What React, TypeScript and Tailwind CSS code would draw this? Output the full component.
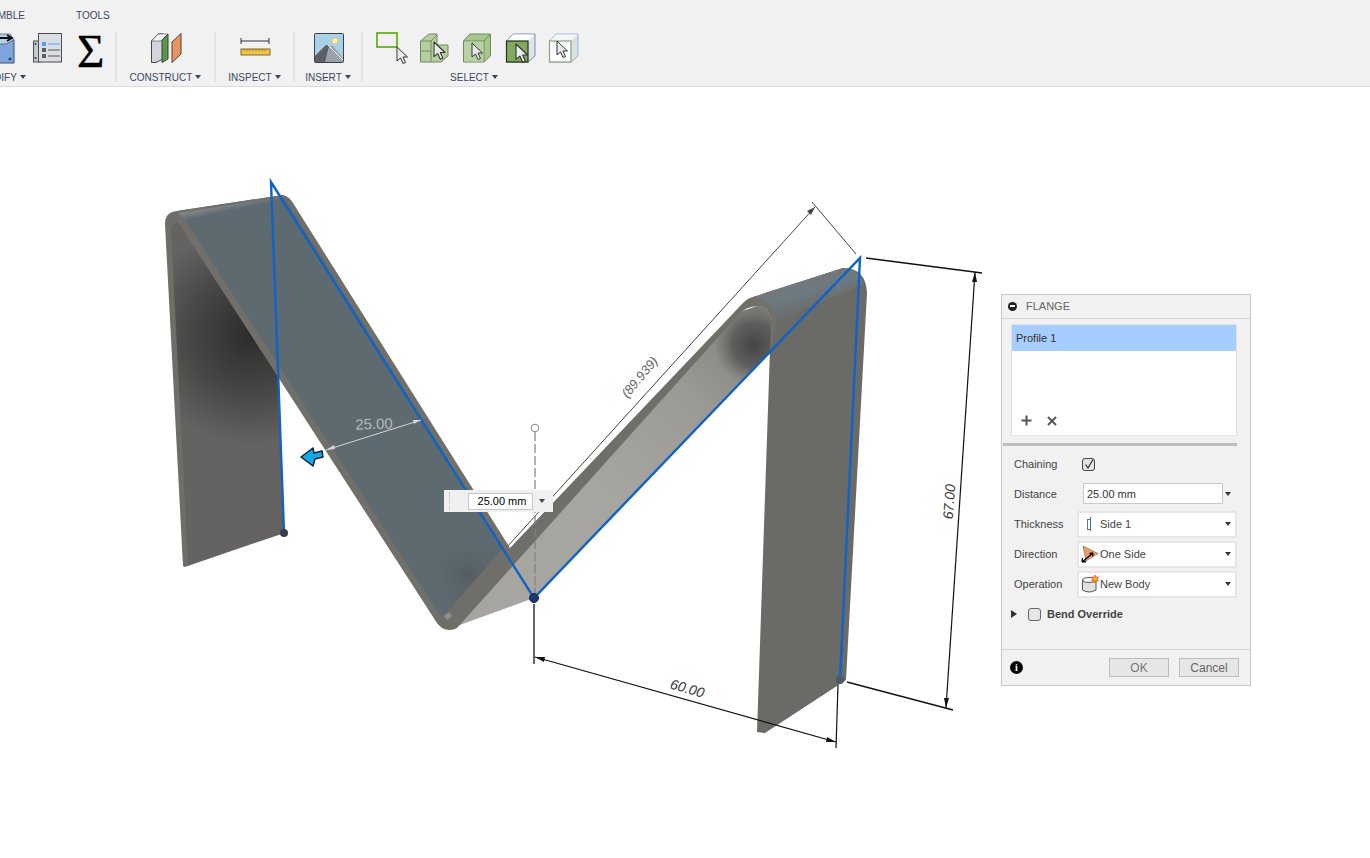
import React from 'react'

const font = { fontFamily: '"Liberation Sans", Arial, sans-serif' }

function Cursor({ x, y, s = 1 }: { x: number; y: number; s?: number }) {
	return (
		<path
			transform={`translate(${x} ${y}) scale(${s})`}
			d="M0 0 L0 14 L3.5 11 L6 16.5 L8.5 15.5 L6 10 L10.5 10 Z"
			fill="#e8eaec"
			stroke="#333"
			strokeWidth="1"
			strokeLinejoin="round"
		/>
	)
}

function Icon({ w = 32, h = 34, children }: { w?: number; h?: number; children: React.ReactNode }) {
	return (
		<svg width={w} height={h} viewBox={`0 0 ${w} ${h}`} className="block shrink-0">
			{children}
		</svg>
	)
}

function Caret() {
	return <span className="ml-[3px] inline-block h-0 w-0 border-x-[3px] border-t-[4px] border-x-transparent border-t-[#3c4354] align-[2px]" />
}

function Sep() {
	return <div className="h-[50px] w-[2px] shrink-0 bg-[#e2e2e2]" />
}

function Group({ width, label, children }: { width: number; label: string; children: React.ReactNode }) {
	return (
		<div className="flex shrink-0 flex-col items-center" style={{ width }}>
			<div className="flex h-[38px] items-start">{children}</div>
			<div className="mt-[2px] text-[10px] leading-[12px] whitespace-nowrap text-[#3b4763]">
				{label}
				<Caret />
			</div>
		</div>
	)
}

function Toolbar() {
	return (
		<div className="relative h-[87px] overflow-hidden border-b border-[#dcdcdc] bg-[#f1f1f1] text-[10px] text-[#3b4763]" style={font}>
			<div className="flex h-[32px] items-start pt-[10px] leading-[12px]">
				<span className="-ml-[29px] w-[105px]">ASSEMBLE</span>
				<span>TOOLS</span>
			</div>
			<div className="flex items-start">
				<div className="-ml-[16px] flex w-[131px] shrink-0 flex-col">
					<div className="flex h-[38px] gap-[16px]">
						<Icon>
							<path d="M2 8 L10 3 H24 L30 8 V31 H2 Z" fill="#7fa6dc" stroke="#37506f" />
							<path d="M2 8 L8 2 H26 L30 8 L22 12 H8 Z" fill="#b9cfe9" stroke="#37506f" strokeWidth=".7" />
							<path d="M14 6 H27 M23 3 L28 6 L23 9" fill="none" stroke="#111" strokeWidth="1.8" />
							<circle cx="26" cy="27" r="1.5" fill="#1c3f74" />
						</Icon>
						<Icon>
							<rect x="1.5" y="9" width="7" height="21" fill="#c4c9ce" stroke="#4a4f55" />
							<rect x="6.5" y="1.5" width="23" height="28.5" fill="#dadee2" stroke="#4a4f55" />
							<circle cx="3.5" cy="12" r="1" fill="#333" />
							<circle cx="3.5" cy="26" r="1" fill="#333" />
							<rect x="10" y="10" width="4" height="4" fill="#5b9cf5" />
							<rect x="10" y="16" width="4" height="4" fill="#5b5f64" />
							<rect x="10" y="22" width="4" height="4" fill="#5b5f64" />
							<path d="M16 12 H28" stroke="#5b9cf5" strokeWidth="1" />
							<path d="M16 18 H28 M16 24 H28" stroke="#555" strokeWidth="1" />
						</Icon>
						<div className="-mt-[3px] -ml-[3px] w-[26px] text-center text-[47px] leading-[44px] text-black" style={{ fontFamily: '"Liberation Serif", serif', WebkitTextStroke: '0.4px #000' }}>
							Σ
						</div>
					</div>
					<div className="-ml-[6px] mt-[2px] text-[10px] leading-[12px] whitespace-nowrap">
						MODIFY
						<Caret />
					</div>
				</div>
				<Sep />
				<Group width={97} label="CONSTRUCT">
					<div className="ml-[1px]">
						<Icon w={32}>
							<path d="M1.5 9 L8 2 H13 V27 L6 30.5 H1.5 Z" fill="#d2d6da" stroke="#444" />
							<path d="M1.5 9 L8 2 H18 L11 9 Z" fill="#f3f4f5" stroke="#444" strokeWidth=".6" />
							<path d="M12 8 L18 2 V27 L12 30.5 Z" fill="#5c9550" stroke="#33452c" />
							<path d="M22 10 L31 1.5 V22 L22 30.5 Z" fill="#e89564" stroke="#5a4030" />
						</Icon>
					</div>
				</Group>
				<Sep />
				<Group width={77} label="INSPECT">
					<Icon>
						<path d="M2 9 H30 M2 6 V12 M30 6 V12" stroke="#333" strokeWidth="1" fill="none" />
						<rect x="2" y="17" width="29" height="6" fill="#eec34a" stroke="#86682a" />
						<path d="M5 17 V19 M8 17 V19 M11 17 V19 M14 17 V19 M17 17 V19 M20 17 V19 M23 17 V19 M26 17 V19" stroke="#86682a" strokeWidth=".8" />
					</Icon>
				</Group>
				<Sep />
				<Group width={66} label="INSERT">
					<div className="ml-[2px]">
						<Icon>
							<rect x="1.5" y="1.5" width="29" height="29" rx="1" fill="#a8d0e8" stroke="#3c3f44" />
							<circle cx="22" cy="9" r="3" fill="#fff3b4" stroke="#f0c85a" />
							<path d="M2 24 L13 13 L20 14 L30 26 V30 H2 Z" fill="#9aa3ac" />
							<path d="M2 24 L13 13 L16 14 L12 30 H2 Z" fill="#5b5f67" />
							<path d="M15 13 L30 28" stroke="#fff" strokeWidth="1" />
						</Icon>
					</div>
				</Group>
				<Sep />
				<Group width={222} label="SELECT">
					<div className="ml-[8px] flex h-[34px] gap-[11px]">
						<Icon>
							<rect x="1" y="1" width="20" height="14" fill="none" stroke="#5aa800" strokeWidth="1.6" />
							<Cursor x={21} y={15} />
						</Icon>
						<Icon>
							<path d="M1.5 9 L10 2 H18 V13 L29 13 V24 L22 30 H1.5 Z" fill="#b5cf9f" stroke="#6f8a62" />
							<path d="M1.5 19 H12 M12 9 V30 M1.5 9 H12 L18 3" fill="none" stroke="#6f8a62" />
							<Cursor x={15} y={10} s={1.05} />
						</Icon>
						<Icon>
							<path d="M1.5 9 L8 2 H28.5 V24 L22 30 H1.5 Z" fill="#a8c78d" stroke="#6f8a62" />
							<path d="M1.5 9 H22 L28.5 2 M22 9 V30" fill="none" stroke="#6f8a62" />
							<rect x="2" y="9.5" width="19.5" height="20" fill="#b8d2a5" />
							<Cursor x={10} y={11} />
						</Icon>
						<Icon>
							<path d="M1.5 9 L8 2 H30 V24 L23 30 H1.5 Z" fill="#dfe2e6" stroke="#6f8fb8" />
							<path d="M2 9 L8 2.5 H29.5 L23 9 Z" fill="#fff" />
							<rect x="1.5" y="9" width="21.5" height="21" fill="#83a960" stroke="#1f3417" strokeWidth="1.2" />
							<Cursor x={11} y={12} s={1.1} />
						</Icon>
						<Icon>
							<path d="M1.5 9 L8 2 H30 V24 L23 30 H1.5 Z" fill="#dcdfe4" stroke="#9fb5d2" />
							<path d="M2 9 L8 2.5 H29.5 L23 9 Z" fill="#f4f5f6" />
							<rect x="1.5" y="9" width="21.5" height="21" fill="#fff" stroke="#85a577" strokeWidth="1.2" />
							<Cursor x={9} y={9} />
						</Icon>
					</div>
				</Group>
			</div>
		</div>
	)
}

function Model() {
	return (
		<svg viewBox="0 87 1370 771" className="absolute inset-0 h-full w-full" style={font}>
			<defs>
				<radialGradient id="legShade" gradientUnits="userSpaceOnUse" cx="250" cy="335" r="110">
					<stop offset="0" stopColor="#2c2c2b" />
					<stop offset=".55" stopColor="#484745" />
					<stop offset="1" stopColor="#646361" />
				</radialGradient>
				<linearGradient id="slateTop" gradientUnits="userSpaceOnUse" x1="230" y1="203" x2="234" y2="222">
					<stop offset="0" stopColor="#83898a" />
					<stop offset=".4" stopColor="#5e6a71" />
					<stop offset="1" stopColor="#5d6a70" />
				</linearGradient>
				<radialGradient id="valleyShade" gradientUnits="userSpaceOnUse" cx="468" cy="575" r="45">
					<stop offset="0" stopColor="#505456" stopOpacity=".6" />
					<stop offset="1" stopColor="#5d6a70" stopOpacity="0" />
				</radialGradient>
				<linearGradient id="lightFace" gradientUnits="userSpaceOnUse" x1="600" y1="490" x2="770" y2="320">
					<stop offset="0" stopColor="#a6a59f" />
					<stop offset=".55" stopColor="#9a9993" />
					<stop offset=".8" stopColor="#8a8986" />
					<stop offset="1" stopColor="#7c7b77" />
				</linearGradient>
				<radialGradient id="bendShade" gradientUnits="userSpaceOnUse" cx="754" cy="345" r="40">
					<stop offset="0" stopColor="#444442" />
					<stop offset=".55" stopColor="#555452" stopOpacity=".8" />
					<stop offset="1" stopColor="#6a6965" stopOpacity="0" />
				</radialGradient>
				<linearGradient id="rightTop" gradientUnits="userSpaceOnUse" x1="805" y1="276" x2="818" y2="318">
					<stop offset="0" stopColor="#767776" />
					<stop offset=".35" stopColor="#6d7a82" />
					<stop offset=".7" stopColor="#6b6e6e" />
					<stop offset="1" stopColor="#6a6a66" />
				</linearGradient>
			</defs>

			<path d="M507 547 L815 207" stroke="#444" strokeWidth="1" />
			<path d="M812 202 L856 254" stroke="#444" strokeWidth="1" />
			<path d="M815 207 L807 211 L811 215 Z" fill="#444" />
			<text transform="translate(643 380) rotate(-50)" fontSize="13" fontStyle="italic" fill="#666" textAnchor="middle">(89.939)</text>

			{/* left leg */}
			<path d="M165 224 Q165 212 177 211 L283 195 L300 225 L279 376 L284 533 L185 567 L183 566 Z" fill="#6e6d68" />
			<path d="M171 230 Q172 222 178 222 L278 376 L284 533 L188 565 Z" fill="url(#legShade)" />

			{/* slate band */}
			<path d="M177 211 L283 195 Q289 196 293 203 L510 548 L457 626 Q447 634 437 623 L178 222 Z" fill="#706f6a" />
			<path d="M178 213 L282 197 Q285 198 287 202 L503 548 L444 616 Q441 617 438 612 L183 217 Z" fill="#5d6a70" />
			<path d="M178 213 L282 197 Q285 198 287 202 L300 222 L194 234 L183 217 Z" fill="url(#slateTop)" />
			<path d="M503 548 L444 616 Q441 617 438 612 L420 585 L460 520 Z" fill="url(#valleyShade)" />

			{/* light face and strip */}
			<path d="M457 626 L534 598 L771 352 L771 320 Q770 306 757 306 L737 313 Z" fill="url(#lightFace)" />
			<path d="M457 626 L534 598 L771 352 L771 320 Q770 306 757 306 L737 313 Z" fill="url(#bendShade)" />
			<path d="M510 548 L743 303 Q748 298 753 297 L758 306 Q746 306 737 316 L457 628 Q450 632 442 628 L437 623 Q445 618 451 612 Z" fill="#6f6e69" />
			<path d="M444 616 L449 612 L452 616 L447 620 Z" fill="#8d908e" />

			{/* right leg */}
			<path d="M753 297 L843 268 Q866 268 867 293 L846 680 L765 733 L757 732 L771 320 Q770 306 757 306 Z" fill="#6a6a66" />
			<path d="M753 297 L843 268 Q858 268 864 284 L775 322 Q772 306 757 306 Z" fill="url(#rightTop)" />
			<path d="M753 297 Q772 298 777 322 L771 345 L771 320 Q770 306 757 306 Z" fill="#72716c" />

			{/* sketch profile */}
			<g fill="none" stroke="#0f63c8" strokeWidth="2.4" strokeLinejoin="miter">
				<path d="M284 533 L271 182 L534 598 L860 258 L840 680" />
			</g>
			<circle cx="284" cy="533" r="4" fill="#333f4a" />
			<circle cx="840" cy="680" r="4" fill="#4b5a66" />
			<circle cx="534" cy="598" r="4.5" fill="#0d3f80" stroke="#3a1430" strokeWidth="1" />

			{/* distance guide */}
			<path d="M535 432 V593" stroke="#7f7f7f" strokeWidth="1.2" strokeDasharray="9 3" />
			<circle cx="535" cy="428" r="3.8" fill="#fff" stroke="#8a8a8a" />

			{/* 25.00 */}
			<path d="M326 450 L421 420" stroke="#d5d5d5" strokeWidth="1" />
			<path d="M326 450 L334 445 L335 449 Z M421 420 L413 420 L414 424 Z" fill="#d5d5d5" />
			<text x="374" y="429" fontSize="15" fill="#b4b9bc" textAnchor="middle" transform="rotate(-2 374 424)">25.00</text>

			{/* arrow */}
			<path d="M301 457 L313 448 L314 453 L322 451 L323 457 L315 459 L313 466 Z" fill="#10a8e8" stroke="#123" strokeWidth="1.5" strokeLinejoin="round" />

			{/* 60.00 */}
			<path d="M534 604 V664" stroke="#111" strokeWidth="1.3" />
			<path d="M535 657 L836 742" stroke="#111" strokeWidth="1.2" />
			<path d="M535 657 L545 657 L544 662 Z M836 742 L826 742 L827 737 Z" fill="#111" />
			<path d="M838 685 L836 748" stroke="#111" strokeWidth="1.2" />
			<text transform="translate(686 693) rotate(16)" fontSize="14" fontStyle="italic" fill="#333" textAnchor="middle">60.00</text>

			{/* 67.00 */}
			<path d="M866 258 L982 273" stroke="#111" strokeWidth="1.3" />
			<path d="M847 682 L953 710" stroke="#111" strokeWidth="1.3" />
			<path d="M975 272 L946 708" stroke="#111" strokeWidth="1.2" />
			<path d="M975 272 L972 282 L977 282 Z M946 708 L944 698 L949 698 Z" fill="#111" />
			<text transform="translate(954 502) rotate(-86)" fontSize="14" fontStyle="italic" fill="#333" textAnchor="middle">67.00</text>
		</svg>
	)
}

function SelectRow({ label, icon, value }: { label: string; icon: React.ReactNode; value: string }) {
	return (
		<div className="flex h-[30px] items-center">
			<div className="w-[75px] shrink-0 pl-[12px]">{label}</div>
			<div className="flex h-[27px] w-[160px] items-center border-2 border-[#e6e6e6] bg-white">
				<div className="flex w-[21px] shrink-0 justify-center">{icon}</div>
				<span className="flex-1">{value}</span>
				<span className="mr-[4px] h-0 w-0 border-x-[3px] border-t-[4px] border-x-transparent border-t-[#333]" />
			</div>
		</div>
	)
}

function FlangePanel() {
	return (
		<div className="absolute top-[207px] left-[1001px] flex h-[392px] w-[250px] flex-col border border-[#c9c9c9] bg-[#f1f1f1] text-[11px] leading-[14px] text-[#444]" style={font}>
			<div className="flex h-[24px] shrink-0 items-center border-b border-[#d2d2d2] pb-[1px] pl-[6px]">
				<span className="flex h-[9px] w-[9px] items-center justify-center rounded-full bg-[#222]">
					<span className="h-[2px] w-[5px] bg-white" />
				</span>
				<span className="ml-[9px] text-[#666]">FLANGE</span>
			</div>
			<div className="mt-[5px] ml-[9px] flex h-[112px] w-[226px] flex-col border border-[#e2e2e2] bg-white">
				<div className="flex h-[26px] items-center bg-[#a6cdff] pl-[4px] text-[#333]">Profile 1</div>
				<div className="mt-auto mb-[9px] flex items-center gap-[15px] pl-[9px]">
					<svg width="11" height="11" viewBox="0 0 11 11">
						<path d="M5.5 0.5 V10.5 M0.5 5.5 H10.5" stroke="#555" strokeWidth="2" />
					</svg>
					<svg width="10" height="10" viewBox="0 0 10 10">
						<path d="M1 1 L9 9 M9 1 L1 9" stroke="#555" strokeWidth="2" />
					</svg>
				</div>
			</div>
			<div className="mt-[7px] mr-[13px] ml-[1px] h-[3px] shrink-0 bg-[#bdbdbd]" />
			<div className="mt-[8px] flex h-[20px] items-center">
				<div className="w-[80px] shrink-0 pl-[12px]">Chaining</div>
				<div className="flex h-[13px] w-[13px] items-center justify-center rounded-[3px] border border-[#444] bg-[#e4e4e4]">
					<svg width="10" height="10" viewBox="0 0 10 10">
						<path d="M1.5 5.5 L4 9 L9 0.5" fill="none" stroke="#222" strokeWidth="1.1" />
					</svg>
				</div>
			</div>
			<div className="mt-[9px] flex h-[21px] items-center">
				<div className="w-[81px] shrink-0 pl-[12px]">Distance</div>
				<div className="flex h-[21px] w-[140px] items-center border border-[#c9c9c9] bg-white pl-[3px] text-[#333]">25.00 mm</div>
				<span className="ml-[2px] h-0 w-0 border-x-[3px] border-t-[4px] border-x-transparent border-t-[#333]" />
			</div>
			<div className="mt-[5px]">
				<SelectRow
					label="Thickness"
					value="Side 1"
					icon={
						<svg width="8" height="16" viewBox="0 0 8 16">
							<rect x="1.5" y="3.5" width="3" height="10" fill="#fff" stroke="#777" />
							<path d="M4.5 1 V15" stroke="#1c7fd6" strokeWidth="1" />
						</svg>
					}
				/>
				<SelectRow
					label="Direction"
					value="One Side"
					icon={
						<svg width="18" height="18" viewBox="0 0 18 18">
							<path d="M2 1 L17 8.5 L5 16 Z" fill="#f09a68" stroke="#8a5a3a" strokeWidth=".6" />
							<path d="M1 17 L12 8 M1 17 L1.5 13 M1 17 L5 16.5 M12 8 L8.5 8.5 M12 8 L11.5 11.5" stroke="#000" strokeWidth="1.3" fill="none" />
						</svg>
					}
				/>
				<SelectRow
					label="Operation"
					value="New Body"
					icon={
						<svg width="18" height="18" viewBox="0 0 18 18">
							<path d="M1.5 5 V15 Q8 19 15 15 V5" fill="#dfe1e3" stroke="#555" />
							<ellipse cx="8" cy="5" rx="6.5" ry="2.5" fill="#f7f7f7" stroke="#555" />
							<path d="M14 0 L15 2.2 L17.5 1.8 L16.2 4 L17.5 6 L15 5.8 L14 8 L13 5.8 L10.5 6 L11.8 4 L10.5 1.8 L13 2.2 Z" fill="#f7a81c" stroke="#d9481c" strokeWidth=".6" />
						</svg>
					}
				/>
			</div>
			<div className="mt-[5px] flex h-[20px] items-center pl-[9px]">
				<span className="h-0 w-0 border-y-[4px] border-l-[6px] border-y-transparent border-l-[#333]" />
				<span className="ml-[11px] h-[13px] w-[13px] rounded-[3px] border border-[#666] bg-[#e6e6e6]" />
				<span className="ml-[6px] font-bold text-[#444]">Bend Override</span>
			</div>
			<div className="mt-auto flex h-[36px] shrink-0 items-center border-t border-[#d2d2d2] pr-[11px] pl-[8px]">
				<span className="flex h-[13px] w-[13px] items-center justify-center rounded-full bg-black text-[10px] leading-none font-bold text-white" style={{ fontFamily: '"Liberation Serif", serif' }}>
					i
				</span>
				<button className="ml-auto h-[19px] w-[60px] border border-[#bdbdbd] bg-[#e6e6e6] text-[12px] text-[#777]">OK</button>
				<button className="ml-[10px] h-[19px] w-[60px] border border-[#bdbdbd] bg-[#e6e6e6] text-[12px] text-[#666]">Cancel</button>
			</div>
		</div>
	)
}

function DistanceInput() {
	return (
		<div className="absolute top-[403px] left-[444px] flex h-[22px] w-[109px] items-center bg-[#f0f0f0] text-[11px] text-black" style={font}>
			<div className="ml-[5px] h-[18px] w-[4px] border-l border-dotted border-[#bbb]" />
			<div className="ml-[15px] flex h-[17px] w-[65px] items-center justify-center border border-[#c6c6c6] bg-white pl-[3px]">25.00 mm</div>
			<span className="ml-[6px] h-0 w-0 border-x-[3px] border-t-[4px] border-x-transparent border-t-[#444]" />
		</div>
	)
}

export default function App() {
	return (
		<div className="flex h-[858px] w-[1370px] flex-col overflow-hidden bg-white">
			<Toolbar />
			<div className="relative flex-1">
				<Model />
				<DistanceInput />
				<FlangePanel />
			</div>
		</div>
	)
}
